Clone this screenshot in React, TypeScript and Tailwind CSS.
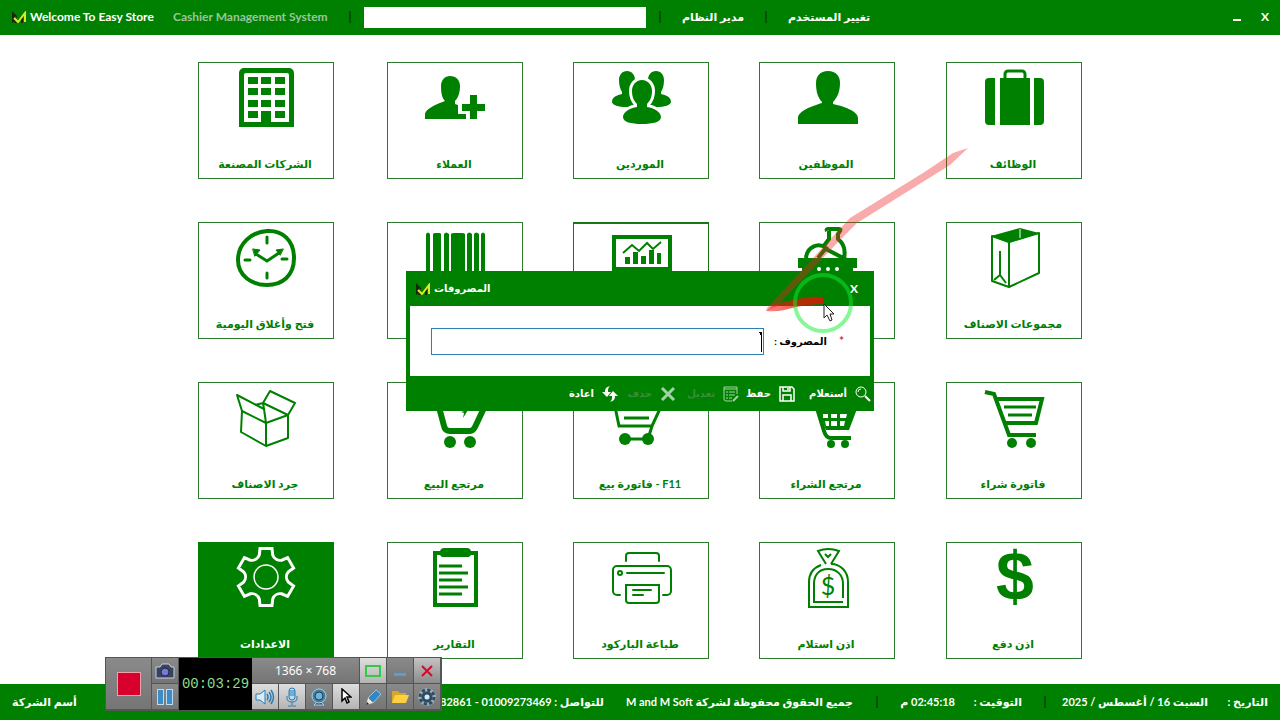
import type { ReactNode } from 'react';

interface Tile {
  label: string;
  icon: ReactNode;
  tone?: 'solid' | 'focus';
}

const FONT_CLS = "font-['Lato','DejaVu_Sans',sans-serif]";

const LINE = { fill: 'none', stroke: 'currentColor' } as const;

const polar = (r: number, deg: number) => {
  const a = (deg * Math.PI) / 180;
  return `${(30 + r * Math.cos(a)).toFixed(1)} ${(30 + r * Math.sin(a)).toFixed(1)}`;
};

// six teeth joined by concave arcs
const GEAR_PATH =
  [-90, -30, 30, 90, 150, 210]
    .map(
      (t, i) =>
        `${i === 0 ? 'M' : 'A8 8 0 0 0 '}${polar(23, t - 17)}L${polar(29, t - 12)}L${polar(29, t + 12)}L${polar(23, t + 17)}`,
    )
    .join('') + `A8 8 0 0 0 ${polar(23, -107)}Z`;

const icons = {
  building: (
    <>
      <path
        fillRule="evenodd"
        d="M8 1h45a5 5 0 0 1 5 5v54H3V6a5 5 0 0 1 5-5zM8 8v47h17V44h10v11h18V8a2 2 0 0 0-2-2H10a2 2 0 0 0-2 2z"
      />
      {[10, 21, 33, 44].map((y) =>
        [12, 25, 39].map((x) =>
          y === 44 && x === 25 ? null : <rect key={`${x}-${y}`} x={x} y={y} width="10" height="7" />,
        ),
      )}
    </>
  ),
  userPlus: (
    <>
      <path d="M25 9c6 0 10 4 10 10 0 7-2 12-5 15v3l3 1v9h8v5H0v-5c0-5 12-10 20-13 -3-3-4-8-4-15 0-6 4-10 9-10z" />
      <path d="M45 28h7v9h8v7h-8v8h-7v-8h-8v-7h8z" />
    </>
  ),
  users: (
    <>
      <path d="M16 4c5 0 8 4 8 9 0 6-2 10-5 13v2c4 1 9 3 9 7 0 3-6 5-13 5S1 38 1 35c0-5 5-7 10-8v-2c-2-3-3-7-3-12 0-5 3-9 8-9z" />
      <path d="M45 4c-5 0-8 4-8 9 0 6 2 10 5 13v2c-4 1-9 3-9 7 0 3 6 5 13 5s14-2 14-5c0-5-5-7-10-8v-2c2-3 3-7 3-12 0-5-3-9-8-9z" />
      <path
        className="stroke-white"
        strokeWidth="6"
        paintOrder="stroke"
        d="M31 13c6 0 10 5 10 11 0 6-2 10-5 13v3c7 1 14 5 14 10 0 5-8 7-19 7s-19-2-19-7c0-5 7-9 14-10v-3c-3-3-5-7-5-13 0-6 4-11 10-11z"
      />
    </>
  ),
  user: (
    <path d="M31 4c8 0 12 5 12 12 0 9-3 15-7 19v2c10 2 25 7 25 14v6H1v-6c0-7 14-12 24-15v-1c-4-4-6-10-6-19C19 9 23 4 31 4z" />
  ),
  suitcase: (
    <>
      <path d="M5 11h6v47H5a4 4 0 0 1-4-4V15a4 4 0 0 1 4-4zM16 11h30v47H16zM50 11h6a4 4 0 0 1 4 4v39a4 4 0 0 1-4 4h-6z" />
      <path {...LINE} strokeWidth="3" d="M21 12V7a3 3 0 0 1 3-3h14a3 3 0 0 1 3 3v5" />
    </>
  ),
  clock: (
    <g {...LINE} strokeLinecap="round">
      <path strokeWidth="4" d="M31 4C46 3 58 13 58 31S46 58 31 58 2 49 2 33 15 5 31 4z" />
      <path strokeWidth="3" d="M31 10v6M31 46v5M9 33h5M46 32h5" />
      <path strokeWidth="3" d="M20 27l11 7 12-8" />
      <path fill="currentColor" strokeWidth="1" d="M17 22l7 1-5 6zM47 22l-7 1 4 5z" />
    </g>
  ),
  barcode: (
    <path d="M1 7q2-3 4 0v53H1zM8 7q1-1 2-1h4q2 0 2 1v53H8zM19 7q2-3 5 0v53h-5zM26 7q1-1 3-1h8q2 0 3 1v53H26zM42 7q2-3 5 0v53h-5zM49 7q2-3 5 0v53h-5zM56 7q2-3 4 0v53h-4z" />
  ),
  chart: (
    <>
      <path {...LINE} strokeWidth="4" d="M3 9h56v32H3z" />
      <path {...LINE} strokeWidth="2" d="M12 25l9-8 7 6 8-8 6 6 8-7" />
      <path d="M14 29h5v7h-5zM22 24h5v12h-5zM30 28h5v8h-5zM38 22h5v14h-5zM46 25h4v11h-4z" />
    </>
  ),
  food: (
    <>
      <path {...LINE} strokeWidth="4" d="M30 4q-1-2 1-2h11q2 0 1 2l-2 3v5c5 4 8 10 6 19M32 4v8l-6 8M9 31C10 20 21 15 29 21l-8 10M27 21l23 12" />
      <path d="M1 31h59v10h-4v12H5V41H1z" />
      <path className="fill-white" d="M20 42a2 2 0 1 1 4 0 2 2 0 0 1-4 0zM29 42a2 2 0 1 1 4 0 2 2 0 0 1-4 0zM38 42a2 2 0 1 1 4 0 2 2 0 0 1-4 0z" />
    </>
  ),
  bag: (
    <>
      <g {...LINE} strokeWidth="2" strokeLinejoin="round">
        <path d="M8 9v45l17 6V15zM25 15v45l30-14V6z" />
        <path d="M16 24v24l-6 5M16 48l6 8" />
      </g>
      <path d="M7 9l29-8 19 5-30 10z" />
      <path className="stroke-white" d="M36 2v9" />
    </>
  ),
  box: (
    <g {...LINE} strokeWidth="2" strokeLinejoin="round">
      <path d="M1 8l5 16 24 12-2-14z" />
      <path d="M6 24l-1 21 25 14V36M30 59l22-8V28l-22 8" />
      <path d="M27 16l7-12 25 12-7 12zM19 18l8-2 1 6" />
    </g>
  ),
  returnSale: (
    <>
      <path {...LINE} strokeWidth="6" d="M2 5h8l9 34q1 5 6 5h20q3 0 5-4l9-19L61 13H14" />
      <path d="M43 23l-5 8 1-5-3-1z" />
      <circle cx="25" cy="55" r="6" />
      <circle cx="45" cy="55" r="6" />
    </>
  ),
  sale: (
    <>
      <g {...LINE} strokeWidth="3">
        <path d="M-3 5h4l7 34h33l14-30H2M12 22h31M13 31h25" />
        <path d="M41 39l-4 13H14" />
      </g>
      <circle cx="14" cy="52" r="6" />
      <circle cx="37" cy="52" r="6" />
    </>
  ),
  returnPurchase: (
    <>
      <path {...LINE} strokeWidth="4" d="M6 5h9l12 39q2 7 7 7h20" />
      <path d="M17 14h46L52 43H29z" />
      <path className="fill-white" d="M26 27h5v4h-5zM34 27h6v4h-6zM43 27h7l-1 4h-6zM28 34h4v5h-3zM34 34h6v5h-6zM43 34h5l-1 5h-4z" />
      <circle cx="34" cy="57" r="4" />
      <circle cx="48" cy="57" r="4" />
    </>
  ),
  purchase: (
    <>
      <path {...LINE} strokeWidth="4" d="M1 5l9 2 15 41h27M13 12h45l-6 24H21" />
      <path {...LINE} strokeWidth="3" d="M20 20h32M24 28h24" />
      <circle cx="28" cy="56" r="5" />
      <circle cx="47" cy="56" r="5" />
    </>
  ),
  gear: (
    <g {...LINE}>
      <path strokeWidth="3" d={GEAR_PATH} />
      <circle cx="30" cy="30" r="12" strokeWidth="1.5" />
    </g>
  ),
  clipboard: (
    <>
      <path {...LINE} strokeWidth="4" d="M10 6h41v52H10z" />
      <path d="M19 1h23q3 0 4 3h1v3l-3 3H17l-3-3V4h1q1-3 4-3z" />
      <path {...LINE} strokeWidth="3" d="M14 19h23M14 26h29M14 33h23M14 40h29M14 47h23" />
    </>
  ),
  printer: (
    <g {...LINE} strokeWidth="2" strokeLinecap="round">
      <path d="M15 14V9a3 3 0 0 1 3-3h27a3 3 0 0 1 3 3v5" />
      <path d="M9 48H6a4 4 0 0 1-4-4V23a4 4 0 0 1 4-4h50a4 4 0 0 1 4 4v21a4 4 0 0 1-4 4h-4" />
      <path d="M15 38h33v15a3 3 0 0 1-3 3H18a3 3 0 0 1-3-3zM16 26h37M22 43h18M22 48h10" />
      <circle cx="9" cy="26" r="2" />
    </g>
  ),
  moneyBag: (
    <>
      <g {...LINE} strokeWidth="2">
        <path d="M29 17L21 4q10-4 21 0l-8 13M28 7l3 3 3-3" />
        <path d="M24 18C16 21 12 27 12 35v25h39V35c0-10-7-18-17-18" />
        <path d="M46 51V37c0-9-6-15-15-15s-14 6-14 15v18h29" />
      </g>
      <text x="31" y="48" fontSize="25" textAnchor="middle" fontFamily="Lato, sans-serif">
        $
      </text>
    </>
  ),
  dollar: (
    <text x="31" y="53" fontSize="68" fontWeight="700" textAnchor="middle" fontFamily="Liberation Sans, sans-serif">
      $
    </text>
  ),
};

const TILES: Tile[] = [
  { label: 'الشركات المصنعة', icon: icons.building },
  { label: 'العملاء', icon: icons.userPlus },
  { label: 'الموردين', icon: icons.users },
  { label: 'الموظفين', icon: icons.user },
  { label: 'الوظائف', icon: icons.suitcase },
  { label: 'فتح وأغلاق اليومية', icon: icons.clock },
  { label: 'الاصناف', icon: icons.barcode },
  { label: 'المصروفات', icon: icons.chart, tone: 'focus' },
  { label: 'الوحدات', icon: icons.food },
  { label: 'مجموعات الاصناف', icon: icons.bag },
  { label: 'جرد الاصناف', icon: icons.box },
  { label: 'مرتجع البيع', icon: icons.returnSale },
  { label: 'F11 - فاتورة بيع', icon: icons.sale },
  { label: 'مرتجع الشراء', icon: icons.returnPurchase },
  { label: 'فاتورة شراء', icon: icons.purchase },
  { label: 'الاعدادات', icon: icons.gear, tone: 'solid' },
  { label: 'التقارير', icon: icons.clipboard },
  { label: 'طباعة الباركود', icon: icons.printer },
  { label: 'اذن استلام', icon: icons.moneyBag },
  { label: 'اذن دفع', icon: icons.dollar },
];

function Logo() {
  return (
    <svg viewBox="0 0 14 12" className="h-3 w-[14px] shrink-0" aria-hidden="true">
      <path d="M0 0l5 5v2L3 5v5l-3 2z" className="fill-[#14280c]" />
      <path d="M9 8l2-2v6H9zM3 9l2 3H2z" className="fill-[#14280c]" />
      <path d="M2 7l4 4 7-9v9" fill="none" strokeWidth="2" className="stroke-[#dfe81c]" />
    </svg>
  );
}

function Divider() {
  return <span className="h-3 w-0.5 shrink-0 bg-[#065006]" />;
}

function Header() {
  return (
    <header className="flex h-[35px] shrink-0 items-center bg-[#008000] pb-px pl-3 pr-[11px] text-[12px] font-bold text-white">
      <Logo />
      <h1 className="ml-1 w-[143px] whitespace-nowrap">Welcome To Easy Store</h1>
      <span className="w-[176px] whitespace-nowrap text-[#9cc49c]">Cashier Management System</span>
      <Divider />
      <input aria-label="بحث" className="mx-[13px] h-[21px] w-[282px] shrink-0 bg-white px-2 text-black outline-none" />
      <div className="flex items-center text-[11px]">
        <Divider />
        <button className="w-[104px] shrink-0 whitespace-nowrap">مدير النظام</button>
        <Divider />
        <button className="w-[124px] shrink-0 whitespace-nowrap">تغيير المستخدم</button>
      </div>
      <div className="ml-auto flex items-center gap-5">
        <button aria-label="تصغير" className="flex h-4 w-2 items-end pb-1">
          <span className="h-0.5 w-2 bg-white" />
        </button>
        <button>X</button>
      </div>
    </header>
  );
}

const TONE_CLS = {
  plain: 'border border-[#2b7a2b] bg-white text-[#008000]',
  focus: 'border-x border-b border-t-2 border-[#1a751a] bg-white text-[#008000]',
  solid: 'border border-[#008000] bg-[#008000] text-white',
};

function TileButton({ tile }: { tile: Tile }) {
  return (
    <button
      className={`flex h-[117px] w-[136px] flex-col items-center justify-between pb-1 pt-1 ${TONE_CLS[tile.tone ?? 'plain']}`}
    >
      <svg viewBox="0 0 60 60" fill="currentColor" className="size-[60px] shrink-0 overflow-visible" aria-hidden="true">
        {tile.icon}
      </svg>
      <span dir="rtl" className="whitespace-nowrap pr-0.5 text-[11px] font-bold leading-5">
        {tile.label}
      </span>
    </button>
  );
}

const toolSvg = 'size-4 shrink-0';

const TOOLS = [
  {
    label: 'أستعلام',
    width: 'w-[76px]',
    icon: (
      <svg viewBox="0 0 16 16" className={toolSvg} {...LINE}>
        <circle cx="6" cy="6" r="5" />
        <path d="M3 6a3 3 0 0 1 3-3" />
        <path strokeWidth="2" d="M10 10l5 5" />
      </svg>
    ),
  },
  {
    label: 'حفظ',
    width: 'w-[56px]',
    icon: (
      <svg viewBox="0 0 16 16" className={toolSvg} {...LINE}>
        <path strokeWidth="1.5" d="M1 1h12l2 2v12H1zM4 15V9h8v6M4 1v4h7V1M9 2v2" />
      </svg>
    ),
  },
  {
    label: 'تعديل',
    width: 'w-[63px]',
    disabled: true,
    icon: (
      <svg viewBox="0 0 16 16" className={toolSvg} {...LINE}>
        <path d="M14 8V1H1v12q0 2 2 2h6M1 3h13M3 6h2M6 6h6M3 9h2M6 9h6M3 12h2M6 12h3" />
        <path strokeWidth="2" d="M10 15l5-5" />
      </svg>
    ),
  },
  {
    label: 'حذف',
    width: 'w-[58px]',
    disabled: true,
    icon: (
      <svg viewBox="0 0 16 16" className={toolSvg} {...LINE}>
        <path strokeWidth="3" d="M2 2l12 12M14 2L2 14" />
      </svg>
    ),
  },
  {
    label: 'اعادة',
    width: 'w-[54px]',
    icon: (
      <svg viewBox="0 0 16 16" className={toolSvg} fill="currentColor">
        <path d="M8 0C4 1 3 3 3 6H0l5 5 4-5H6c0-3 0-4 2-6zM8 16c4-1 5-3 5-6h3l-5-5-4 5h3c0 3 0 4-2 6z" />
      </svg>
    ),
  },
];

function ExpenseDialog() {
  return (
    <section
      role="dialog"
      aria-label="المصروفات"
      dir="rtl"
      className="absolute left-1/2 top-[271px] w-[468px] -translate-x-1/2 bg-[#008000] text-[10px] font-bold text-white"
    >
      <div className="flex h-[35px] items-center justify-between pl-[10px] pr-4">
        <button className="text-[12px]">X</button>
        <div className="flex items-center gap-1">
          <h2>المصروفات</h2>
          <Logo />
        </div>
      </div>
      <div className="mx-1 flex h-[70px] items-center bg-white pr-[26px] text-black">
        <span className="w-[17px] text-[12px] leading-5 text-[#e0203c]">*</span>
        <label htmlFor="expense" className="w-[63px] whitespace-nowrap">
          المصروف :
        </label>
        <div className="relative shrink-0">
          <input
            id="expense"
            className="block h-[27px] w-[333px] border border-[#2f7fb0] bg-white px-1 text-[12px] font-normal outline-none"
          />
          {/* right-to-left caret */}
          <svg viewBox="0 0 4 20" className="pointer-events-none absolute right-px top-1 h-5 w-1" aria-hidden="true">
            <path d="M0 0h3v20H2V3H1V1H0z" />
          </svg>
        </div>
      </div>
      <div className="flex h-[35px] items-center pr-[3px]">
        {TOOLS.map((t) => (
          <button
            key={t.label}
            disabled={t.disabled}
            className={`flex shrink-0 items-center gap-2 whitespace-nowrap ${t.width} ${t.disabled ? 'text-[#a3d3a3]' : 'text-white'}`}
          >
            {t.icon}
            <span className={t.disabled ? 'text-[#3c8c3c]' : ''}>{t.label}</span>
          </button>
        ))}
      </div>
    </section>
  );
}

// freehand mark and click ripple over the screen
function PointerTrail() {
  return (
    <svg
      viewBox="0 0 210 192"
      className="pointer-events-none absolute left-[calc(50%+120px)] top-[142px] h-48 w-[210px]"
      aria-hidden="true"
    >
      <defs>
        <linearGradient id="stroke" x1="0" x2="1">
          <stop offset="0" stopColor="#ff1010" stopOpacity="0.5" />
          <stop offset="1" stopColor="#d81800" stopOpacity="0.9" />
        </linearGradient>
      </defs>
      <path d="M208 6L193 11 163 31 90 76 77 90 7 166l-1 3 10-4 64-67 17-17 93-58z" fill="#f02020" fillOpacity="0.38" />
      <path d="M6 169q10 1 18-1 20-6 39-6v-7q-12-1-20 1L14 162z" fill="url(#stroke)" />
      <circle cx="63" cy="161" r="28" fill="none" stroke="#10f030" strokeOpacity="0.5" strokeWidth="4" />
    </svg>
  );
}

function Cursor() {
  return (
    <svg
      viewBox="0 0 12 19"
      className="pointer-events-none absolute left-[calc(50%+183px)] top-[303px] h-[19px] w-3"
      aria-hidden="true"
    >
      <path d="M1 1v14l3-3 3 6 2-1-2-6h4z" fill="#fff" stroke="#222" />
    </svg>
  );
}

const CELL_CLS = 'flex items-center justify-center border-b border-r border-[#555]';
const DARK_CLS = 'bg-linear-to-b from-[#8a8a8a] to-[#757575]';
const LIGHT_CLS = 'bg-linear-to-b from-[#dedede] to-[#b4b4b4]';

function Recorder() {
  return (
    <aside
      dir="ltr"
      aria-label="Screen recorder"
      className="absolute left-[105px] top-[657px] flex h-[54px] w-[337px] border border-[#555] bg-[#808080]"
    >
      <button aria-label="Stop" className={`w-[46px] ${CELL_CLS} ${DARK_CLS}`}>
        <span className="size-6 border border-[#f0a0a8] bg-[#d8002c]" />
      </button>
      <div className="grid w-[27px] grid-rows-2">
        <button aria-label="Snapshot" className={`${CELL_CLS} ${DARK_CLS}`}>
          <svg viewBox="0 0 20 16" className="h-4 w-5">
            <path d="M1 4h4l2-3h7l2 3h3v11H1z" fill="#39435e" stroke="#c8d0e8" />
            <circle cx="10" cy="9" r="4" fill="#7478d8" stroke="#20283c" />
          </svg>
        </button>
        <button aria-label="Pause" className={`${CELL_CLS} ${DARK_CLS} gap-0.5`}>
          <span className="h-4 w-[7px] border border-[#b9dcf2] bg-[#3c8cc8]" />
          <span className="h-4 w-[7px] border border-[#b9dcf2] bg-[#3c8cc8]" />
        </button>
      </div>
      <div className="flex w-[73px] items-center justify-center bg-black font-['Liberation_Mono',monospace] text-[14px] text-[#8fdc8f]">
        00:03:29
      </div>
      <div className="grid flex-1 grid-cols-7 grid-rows-2">
        <div className={`col-span-4 ${CELL_CLS} ${DARK_CLS} font-['Noto_Sans',sans-serif] text-[12px] text-white`}>
          1366 × 768
        </div>
        <button aria-label="Region" className={`${CELL_CLS} ${LIGHT_CLS}`}>
          <span className="h-3 w-4 border-2 border-[#38c848]" />
        </button>
        <button aria-label="Minimize" className={`${CELL_CLS} ${DARK_CLS}`}>
          <span className="mt-2 h-[3px] w-3 bg-[#5c9cd0]" />
        </button>
        <button aria-label="Close" className={`${CELL_CLS} bg-linear-to-b from-[#c4c4c4] to-[#8c8c8c]`}>
          <svg viewBox="0 0 12 12" className="size-3">
            <path d="M1 1l10 10M11 1L1 11" stroke="#d8082c" strokeWidth="2" />
          </svg>
        </button>
        <button aria-label="Sound" className={`${CELL_CLS} ${LIGHT_CLS}`}>
          <svg viewBox="0 0 20 18" className="h-[18px] w-5" fill="none" stroke="#2c7cb4">
            <path d="M1 6h4l5-4v14l-5-4H1z" fill="#d8ecf8" />
            <path d="M12 6q2 3 0 6M14 4q4 5 0 10M16 2q5 7 0 14" strokeWidth="1.5" />
          </svg>
        </button>
        <button aria-label="Microphone" className={`${CELL_CLS} ${LIGHT_CLS}`}>
          <svg viewBox="0 0 14 20" className="h-5 w-[14px]" fill="none" stroke="#2c7cb4">
            <rect x="4" y="1" width="6" height="12" rx="3" fill="#b8dcf0" />
            <path d="M4 4h6M4 6h6M4 8h6M2 9v2q0 4 5 4t5-4V9M7 15v3M3 19h8" />
          </svg>
        </button>
        <button aria-label="Webcam" className={`${CELL_CLS} ${DARK_CLS}`}>
          <svg viewBox="0 0 16 18" className="h-[18px] w-4">
            <path d="M3 17q5-6 10 0z" fill="#284c68" stroke="#a8d0e8" />
            <circle cx="8" cy="8" r="7" fill="#4080a8" stroke="#a8d0e8" />
            <circle cx="8" cy="8" r="4" fill="#78b0d0" stroke="#204058" />
          </svg>
        </button>
        <button aria-label="Show cursor" className={`${CELL_CLS} ${LIGHT_CLS}`}>
          <svg viewBox="0 0 12 17" className="h-[17px] w-3">
            <path d="M2 1v12l3-3 2 5 2-1-2-5h4z" fill="#fff" stroke="#000" strokeWidth="1.5" />
          </svg>
        </button>
        <button aria-label="Draw" className={`${CELL_CLS} ${DARK_CLS}`}>
          <svg viewBox="0 0 18 18" className="size-[18px]">
            <path d="M4 10l8-8 5 4-8 9z" fill="#2c88c8" stroke="#90c8ec" />
            <path d="M4 10l5 5-7 2z" fill="#f4e4d0" />
            <path d="M3 14l2 2-3 1z" fill="#222" />
          </svg>
        </button>
        <button aria-label="Open folder" className={`${CELL_CLS} ${DARK_CLS}`}>
          <svg viewBox="0 0 18 14" className="h-[14px] w-[18px]">
            <path d="M1 13V1h6l2 2h6v3" fill="#d8a820" />
            <path d="M1 13L4 5h14l-3 8z" fill="#fcd040" />
          </svg>
        </button>
        <button aria-label="Settings" className={`${CELL_CLS} ${DARK_CLS}`}>
          <svg viewBox="0 0 20 20" className="size-5">
            <circle cx="10" cy="10" r="9" fill="#b4c4d0" fillOpacity="0.6" />
            <circle cx="10" cy="10" r="7" fill="none" stroke="#2c4c64" strokeWidth="3" strokeDasharray="3.2 2.3" />
            <circle cx="10" cy="10" r="4" fill="#dce8f0" stroke="#2c4c64" strokeWidth="3" />
          </svg>
        </button>
      </div>
    </aside>
  );
}

function StatusBar() {
  return (
    <footer
      dir="rtl"
      className="flex h-9 shrink-0 items-center whitespace-nowrap bg-[#008000] px-3 text-[11px] font-bold text-white"
    >
      <span className="w-[60px] shrink-0">التاريخ :</span>
      <span className="w-[162px] shrink-0">السبت 16 / أغسطس / 2025</span>
      <Divider />
      <span className="mr-[22px] w-[67px] shrink-0">التوقيت :</span>
      <span className="w-[77px] shrink-0">02:45:18 م</span>
      <Divider />
      <span className="mr-[23px] w-[249px] shrink-0">جميع الحقوق محفوظة لشركة M and M Soft</span>
      <span className="shrink-0">للتواصل : 01009273469 - 82861</span>
      <span className="mr-auto">أسم الشركة</span>
    </footer>
  );
}

export default function App() {
  return (
    <div className={`relative flex min-h-screen flex-col bg-white ${FONT_CLS}`}>
      <Header />
      <main className="flex-1 pb-6 pt-[27px]">
        <div className="grid grid-cols-[139px_136px_136px_137px_136px] justify-center gap-x-[50px] gap-y-[43px]">
          {TILES.map((tile) => (
            <TileButton key={tile.label} tile={tile} />
          ))}
        </div>
      </main>
      <StatusBar />
      <ExpenseDialog />
      <PointerTrail />
      <Cursor />
      <Recorder />
    </div>
  );
}
